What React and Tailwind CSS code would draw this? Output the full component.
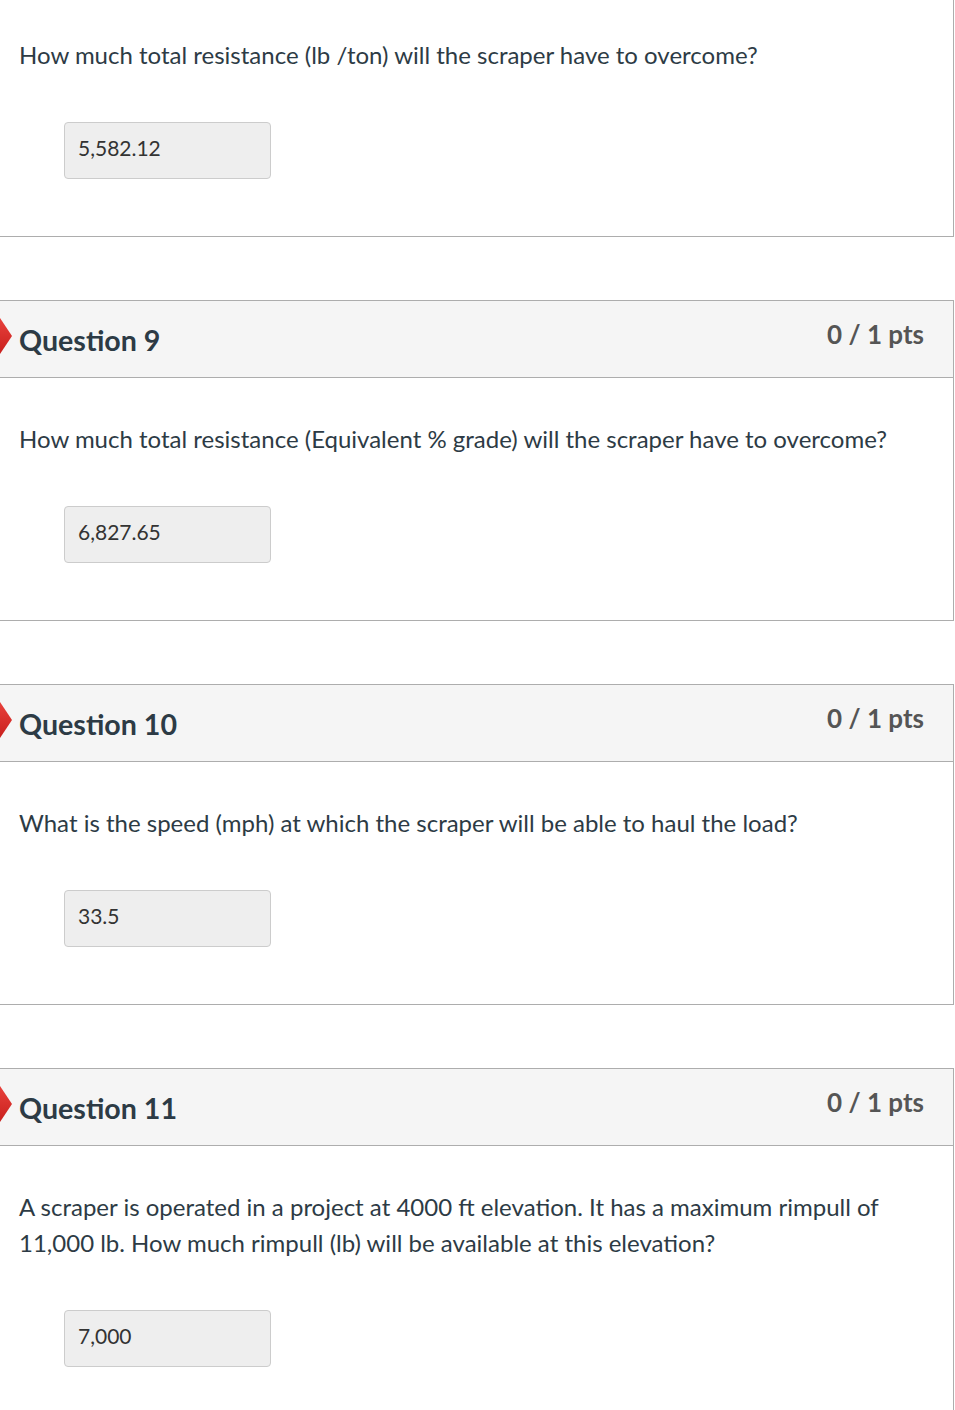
import React from 'react';

const questions = [
  { id: 8, header: false, text: 'How much total resistance (lb /ton) will the scraper have to overcome?', answer: '5,582.12' },
  { id: 9, header: true, text: 'How much total resistance (Equivalent % grade) will the scraper have to overcome?', answer: '6,827.65' },
  { id: 10, header: true, text: 'What is the speed (mph) at which the scraper will be able to haul the load?', answer: '33.5' },
  {
    id: 11,
    header: true,
    text: 'A scraper is operated in a project at 4000 ft elevation. It has a maximum rimpull of 11,000 lb. How much rimpull (lb) will be available at this elevation?',
    answer: '7,000',
  },
];

const Marker = () => (
  <svg className="absolute left-0 top-[17px]" width="12" height="36" viewBox="0 0 12 36">
    <defs>
      <linearGradient id="mk" x1="0" y1="0" x2="0" y2="1">
        <stop offset="0" stopColor="#e8413c" />
        <stop offset="1" stopColor="#c9201d" />
      </linearGradient>
    </defs>
    <polygon points="0,0 12,18 0,36" fill="url(#mk)" />
  </svg>
);

const QuestionCard = ({ q, first }) => (
  <div className={`border-r border-[#adadad] border-b ${first ? '' : 'mt-[63px] border-t'} bg-white`}>
    {q.header && (
      <div className="relative h-[77px] bg-[#f5f5f5] border-b border-[#adadad] flex justify-between">
        <Marker />
        <h2 className="pl-[19px] pt-[22px] text-[28.6px] leading-[34px] font-bold text-[#2d3b45]">Question {q.id}</h2>
        <div className="pr-[29px] pt-[18px] text-[26px] leading-[30px] font-bold text-[#555]">0 / 1 pts</div>
      </div>
    )}
    <div className={`${first ? 'pt-[37px]' : 'pt-[43px]'} pb-[57px] pl-[19px] pr-[40px]`}>
      <p className="text-[24px] leading-[36px] text-[#2d3b45]">{q.text}</p>
      <div className="mt-[49px] ml-[45px] w-[207px] h-[57px] rounded-[4px] border border-[#cccccc] bg-[#eeeeee] flex items-center pl-[13px] pb-[6px] text-[21px] text-[#333]">
        {q.answer}
      </div>
    </div>
  </div>
);

export default function App() {
  return (
    <div className="w-[955px] h-[1410px] overflow-hidden bg-white" style={{ fontFamily: 'Lato, "Open Sans", sans-serif' }}>
      <div className="w-[954px]">
        {questions.map((q, i) => (
          <QuestionCard key={q.id} q={q} first={i === 0} />
        ))}
      </div>
    </div>
  );
}
